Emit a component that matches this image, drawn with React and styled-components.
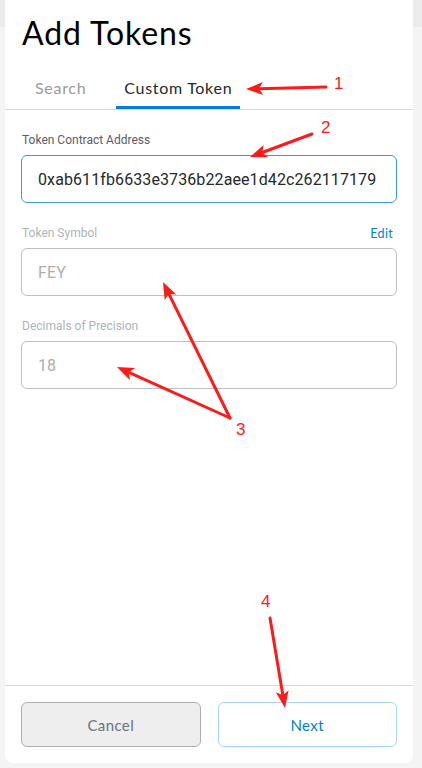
import styled, { createGlobalStyle } from "styled-components";

const GlobalStyle = createGlobalStyle`
  html, body {
    margin: 0;
    padding: 0;
  }
  body {
    background: linear-gradient(#ececec 0 27px, #f4f4f4 27px);
    font-family: Roboto, "Liberation Sans", sans-serif;
  }
`;

const Page = styled.div`
  position: relative;
  width: 422px;
  height: 768px;
  overflow: hidden;
`;

const Card = styled.div`
  display: flex;
  flex-direction: column;
  margin-left: 5px;
  width: 408px;
  height: 763px;
  background: #ffffff;
  border-radius: 0 0 8px 8px;
`;

const Header = styled.div`
  display: flex;
  flex-direction: column;
  border-bottom: 1px solid #d6d9dc;
`;

const Title = styled.h1`
  margin: 13px 0 0 17px;
  font-family: Lato, "Liberation Sans", sans-serif;
  font-weight: 400;
  font-size: 32px;
  line-height: 40px;
  letter-spacing: 0.9px;
  color: #000000;
`;

const Tabs = styled.div`
  display: flex;
  gap: 22px;
  padding-left: 22px;
  margin-top: 25px;
`;

const Tab = styled.div`
  padding: 0 8px 8px;
  font-family: Lato, "Liberation Sans", sans-serif;
  font-size: 16px;
  line-height: 20px;
  letter-spacing: 0.7px;
  color: ${(p) => (p.$active ? "#24292e" : "#9b9b9b")};
  border-bottom: 3px solid ${(p) => (p.$active ? "#037dd6" : "transparent")};
`;

const Content = styled.div`
  flex: 1;
  display: flex;
  flex-direction: column;
  gap: 23px;
  padding: 23px 16px 0;
`;

const Field = styled.div`
  display: flex;
  flex-direction: column;
  gap: 8px;
`;

const LabelRow = styled.div`
  display: flex;
  justify-content: space-between;
  align-items: center;
  height: 14px;
  padding: 0 4px 0 1px;
`;

const Label = styled.span`
  font-size: 12px;
  color: ${(p) => (p.$disabled ? "#aeb3b8" : "#5b5d67")};
`;

const EditLink = styled.span`
  font-family: Lato, "Liberation Sans", sans-serif;
  font-size: 12.5px;
  letter-spacing: 0.3px;
  color: #037dd6;
`;

const Input = styled.div`
  display: flex;
  align-items: center;
  box-sizing: border-box;
  height: 48px;
  padding-left: 16px;
  border: 1px solid ${(p) => (p.$focused ? "#3c9be0" : "#bbc0c5")};
  border-radius: 6px;
  font-size: 16px;
  letter-spacing: 0.1px;
  color: ${(p) => (p.$disabled ? "#aeaeae" : "#24292e")};
`;

const Footer = styled.div`
  display: flex;
  gap: 17px;
  padding: 16px;
  border-top: 1px solid #d6d9dc;
`;

const Button = styled.button`
  flex: 1;
  height: 45px;
  border-radius: 6px;
  font-family: Lato, "Liberation Sans", sans-serif;
  font-size: 15px;
  letter-spacing: 0.4px;
  cursor: pointer;
  background: ${(p) => (p.$primary ? "#ffffff" : "#eeeeee")};
  border: 1px solid ${(p) => (p.$primary ? "#a8d6f5" : "#b0b0b0")};
  color: ${(p) => (p.$primary ? "#037dd6" : "#6a737d")};
`;

const Overlay = styled.svg`
  position: absolute;
  top: 0;
  left: 0;
  pointer-events: none;
`;

const Num = styled.text`
  font-family: "Liberation Sans", Arial, sans-serif;
  font-size: 17px;
  fill: #ff1a1a;
`;

function Arrow({ x1, y1, x2, y2 }) {
  const dx = x2 - x1;
  const dy = y2 - y1;
  const len = Math.hypot(dx, dy);
  const ux = dx / len;
  const uy = dy / len;
  const head = 17;
  const half = 6.5;
  const bx = x2 - ux * head;
  const by = y2 - uy * head;
  const pts = [
    `${x2},${y2}`,
    `${bx - uy * half},${by + ux * half}`,
    `${bx + ux * 4},${by + uy * 4}`,
    `${bx + uy * half},${by - ux * half}`,
  ].join(" ");
  return (
    <g>
      <line
        x1={x1}
        y1={y1}
        x2={bx + ux * 4}
        y2={by + uy * 4}
        stroke="#ff1a1a"
        strokeWidth="3"
        strokeLinecap="round"
      />
      <polygon points={pts} fill="#ff1a1a" />
    </g>
  );
}

export default function App() {
  return (
    <Page>
      <GlobalStyle />
      <Card>
        <Header>
          <Title>Add Tokens</Title>
          <Tabs>
            <Tab>Search</Tab>
            <Tab $active>Custom Token</Tab>
          </Tabs>
        </Header>
        <Content>
          <Field>
            <LabelRow>
              <Label>Token Contract Address</Label>
            </LabelRow>
            <Input $focused>0xab611fb6633e3736b22aee1d42c262117179</Input>
          </Field>
          <Field>
            <LabelRow>
              <Label $disabled>Token Symbol</Label>
              <EditLink>Edit</EditLink>
            </LabelRow>
            <Input $disabled>FEY</Input>
          </Field>
          <Field>
            <LabelRow>
              <Label $disabled>Decimals of Precision</Label>
            </LabelRow>
            <Input $disabled>18</Input>
          </Field>
        </Content>
        <Footer>
          <Button>Cancel</Button>
          <Button $primary>Next</Button>
        </Footer>
      </Card>
      <Overlay width="422" height="768" viewBox="0 0 422 768">
        <Arrow x1={326} y1={87} x2={246} y2={89} />
        <Num x={334} y={89}>1</Num>
        <Arrow x1={312} y1={134} x2={250} y2={157} />
        <Num x={321} y={133}>2</Num>
        <Arrow x1={230} y1={418} x2={163} y2={282} />
        <Arrow x1={230} y1={418} x2={117} y2={367} />
        <Num x={236} y={435}>3</Num>
        <Arrow x1={270} y1={618} x2={285} y2={708} />
        <Num x={261} y={607}>4</Num>
      </Overlay>
    </Page>
  );
}
